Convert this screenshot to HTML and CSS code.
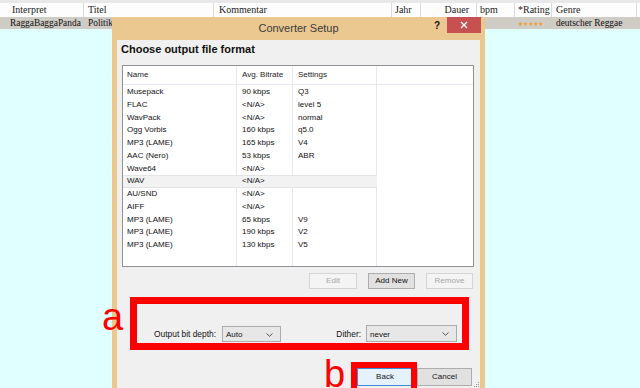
FILE: index.html
```html
<!DOCTYPE html>
<html>
<head>
<meta charset="utf-8">
<title>Converter Setup</title>
<link rel="stylesheet" href="styles.css">
</head>
<body>
<div class="grid">
  <div class="grid-top"></div>
  <div class="grid-head">
    <div class="c c1">Interpret</div>
    <div class="c c2">Titel</div>
    <div class="c c3">Kommentar</div>
    <div class="c c4">Jahr</div>
    <div class="c c5">Dauer</div>
    <div class="c c6">bpm</div>
    <div class="c c7">*Rating</div>
    <div class="c c8">Genre</div>
  </div>
  <div class="grid-row">
    <div class="c c1">RaggaBaggaPanda</div>
    <div class="c c2">Politik</div>
    <div class="c c3"></div>
    <div class="c c4"></div>
    <div class="c c5"></div>
    <div class="c c6"></div>
    <div class="c c7"><span class="stars">★★★★★</span></div>
    <div class="c c8">deutscher Reggae</div>
  </div>
</div>

<div class="dialog">
  <div class="titlebar">
    <div class="title">Converter Setup</div>
    <div class="controls">
      <div class="help">?</div>
      <div class="close">
        <svg width="8" height="8" viewBox="0 0 8 8"><path d="M1 1L7 7M7 1L1 7" stroke="#fff" stroke-width="1.3" fill="none"/></svg>
      </div>
    </div>
  </div>
  <div class="client">
    <div class="heading">Choose output file format</div>
    <div class="list">
      <div class="lh">
        <div class="cell col-name">Name</div>
        <div class="cell col-br">Avg. Bitrate</div>
        <div class="cell col-set">Settings</div>
      </div>
      <div class="lbody">
        <div class="lrow"><div class="cell col-name">Musepack</div><div class="cell col-br">90 kbps</div><div class="cell col-set">Q3</div></div>
        <div class="lrow"><div class="cell col-name">FLAC</div><div class="cell col-br">&lt;N/A&gt;</div><div class="cell col-set">level 5</div></div>
        <div class="lrow"><div class="cell col-name">WavPack</div><div class="cell col-br">&lt;N/A&gt;</div><div class="cell col-set">normal</div></div>
        <div class="lrow"><div class="cell col-name">Ogg Vorbis</div><div class="cell col-br">160 kbps</div><div class="cell col-set">q5.0</div></div>
        <div class="lrow"><div class="cell col-name">MP3 (LAME)</div><div class="cell col-br">165 kbps</div><div class="cell col-set">V4</div></div>
        <div class="lrow"><div class="cell col-name">AAC (Nero)</div><div class="cell col-br">53 kbps</div><div class="cell col-set">ABR</div></div>
        <div class="lrow"><div class="cell col-name">Wave64</div><div class="cell col-br">&lt;N/A&gt;</div><div class="cell col-set"></div></div>
        <div class="lrow sel"><div class="cell col-name">WAV</div><div class="cell col-br">&lt;N/A&gt;</div><div class="cell col-set"></div></div>
        <div class="lrow"><div class="cell col-name">AU/SND</div><div class="cell col-br">&lt;N/A&gt;</div><div class="cell col-set"></div></div>
        <div class="lrow"><div class="cell col-name">AIFF</div><div class="cell col-br">&lt;N/A&gt;</div><div class="cell col-set"></div></div>
        <div class="lrow"><div class="cell col-name">MP3 (LAME)</div><div class="cell col-br">65 kbps</div><div class="cell col-set">V9</div></div>
        <div class="lrow"><div class="cell col-name">MP3 (LAME)</div><div class="cell col-br">190 kbps</div><div class="cell col-set">V2</div></div>
        <div class="lrow"><div class="cell col-name">MP3 (LAME)</div><div class="cell col-br">130 kbps</div><div class="cell col-set">V5</div></div>
      </div>
    </div>
    <div class="btnrow">
      <div class="btn disabled w48">Edit</div>
      <div class="btn w47">Add New</div>
      <div class="btn disabled w47">Remove</div>
    </div>
    <div class="options">
      <div class="opt g1">
        <span class="lbl">Output bit depth:</span>
        <div class="select s-auto"><span>Auto</span>
          <svg width="7" height="4" viewBox="0 0 7 4"><path d="M0.5 0.5L3.5 3.3L6.5 0.5" stroke="#555" stroke-width="1" fill="none"/></svg>
        </div>
      </div>
      <div class="opt g2">
        <span class="lbl">Dither:</span>
        <div class="select s-never"><span>never</span>
          <svg width="7" height="4" viewBox="0 0 7 4"><path d="M0.5 0.5L3.5 3.3L6.5 0.5" stroke="#555" stroke-width="1" fill="none"/></svg>
        </div>
      </div>
    </div>
    <div class="footer">
      <div class="btn primary w56">Back</div>
      <div class="btn w55">Cancel</div>
    </div>
  </div>
</div>

<div class="box box-a"></div>
<div class="box box-b"></div>
<div class="mark mark-a">a</div>
<div class="mark mark-b">b</div>
<svg class="grip" width="6" height="6" viewBox="0 0 6 6">
  <rect x="4" y="0" width="1" height="1" fill="#999"/>
  <rect x="2" y="2" width="1" height="1" fill="#999"/>
  <rect x="4" y="2" width="1" height="1" fill="#999"/>
  <rect x="0" y="4" width="1" height="1" fill="#999"/>
  <rect x="2" y="4" width="1" height="1" fill="#999"/>
  <rect x="4" y="4" width="1" height="1" fill="#999"/>
</svg>
</body>
</html>
```

FILE: styles.css
```css
* { box-sizing: border-box; }
html, body { margin: 0; padding: 0; }
body {
  width: 640px;
  height: 388px;
  overflow: hidden;
  position: relative;
  background: #e0ffff;
  font-family: "Liberation Serif", "Times New Roman", serif;
}

/* background track list */
.grid-top { height: 3px; background: #e8e8e8; }
.grid-head {
  display: flex;
  height: 14px;
  background: #fdfdfd;
  font-size: 10px;
  line-height: 14px;
  color: #222;
}
.grid-row {
  display: flex;
  height: 12px;
  background: #cfcbc5;
  font-size: 9.4px;
  line-height: 12px;
  color: #111;
}
.c {
  white-space: nowrap;
  overflow: hidden;
  padding-left: 4px;
  border-right: 1px solid #dadada;
}
.grid-row .c { border-right: none; overflow: visible; }
.c1 { width: 84px; padding-left: 12px; }
.grid-row .c1 { padding-left: 10px; }
.c2 { width: 130px; }
.c3 { width: 178px; padding-left: 5px; }
.c4 { width: 29px; padding-left: 3px; }
.c5 { width: 56px; text-align: right; padding-right: 7px; }
.c6 { width: 38px; padding-left: 3px; }
.c7 { width: 37px; padding-left: 3px; }
.c8 { width: 85px; }
.stars {
  font-family: "DejaVu Sans", sans-serif;
  font-size: 6px;
  color: #f0a030;
  letter-spacing: -0.3px;
}

/* dialog window */
.dialog {
  position: absolute;
  left: 112px;
  top: 17px;
  width: 373px;
  height: 371px;
  background: #ecc891;
  font-family: "Liberation Sans", Arial, sans-serif;
  font-size: 8px;
  color: #000;
}
.titlebar {
  height: 23px;
  display: grid;
  grid-template-columns: 1fr auto 1fr;
  align-items: start;
}
.title {
  grid-column: 2;
  font-size: 11px;
  line-height: 23px;
  color: #3a3a3a;
}
.controls {
  grid-column: 3;
  justify-self: end;
  display: flex;
  padding-right: 4px;
}
.help {
  width: 20px;
  height: 16px;
  font-weight: bold;
  font-size: 10px;
  line-height: 17px;
  text-align: center;
  color: #111;
}
.close {
  width: 34px;
  height: 16px;
  background: #c75050;
  display: flex;
  align-items: center;
  justify-content: center;
}
.client {
  margin: 0 5px;
  height: 348px;
  background: #f0f0f0;
  display: flex;
  flex-direction: column;
}
.heading {
  margin-top: 2px;
  padding-left: 4px;
  font-size: 11px;
  font-weight: bold;
  line-height: 14px;
  color: #111;
}

/* list view */
.list {
  margin: 9px 0 0 5px;
  width: 352px;
  height: 202px;
  border: 1px solid #8e9296;
  background: #fff;
  display: flex;
  flex-direction: column;
}
.lh {
  display: flex;
  height: 19px;
  line-height: 18px;
  border-bottom: 1px solid #e6eaf0;
  color: #222;
}
.lh .cell { border-right: 1px solid #e6eaf0; }
.cell { white-space: nowrap; overflow: hidden; }
.col-name { width: 114px; padding-left: 4px; }
.col-br { width: 56px; padding-left: 5px; }
.col-set { width: 84px; padding-left: 5px; }
.lbody {
  flex: 1;
  padding-top: 1px;
  background-image:
    linear-gradient(#e6eaf0, #e6eaf0),
    linear-gradient(#e6eaf0, #e6eaf0),
    linear-gradient(#e6eaf0, #e6eaf0);
  background-size: 1px 100%, 1px 100%, 1px 100%;
  background-position: 113px 0, 169px 0, 253px 0;
  background-repeat: no-repeat;
}
.lrow {
  display: flex;
  width: 254px;
  height: 12.75px;
  line-height: 12.75px;
  color: #111;
}
.lrow.sel {
  background: #f2f2f2;
  box-shadow: inset 0 1px 0 #e4e4e4, inset 0 -1px 0 #e4e4e4;
}

/* buttons */
.btnrow {
  margin-top: 6px;
  display: flex;
  justify-content: flex-end;
  gap: 11px;
  padding-right: 7px;
}
.btn {
  height: 16px;
  line-height: 14px;
  text-align: center;
  border: 1px solid #adadad;
  background: #e1e1e1;
  color: #111;
}
.btn.disabled {
  border-color: #d4d4d4;
  background: #f4f4f4;
  color: #a6a6a6;
}
.btn.primary {
  border-color: #3c8ad6;
  background: #e5f1fb;
}
.w48 { width: 48px; }
.w47 { width: 47px; }
.w56 { width: 56px; }
.w55 { width: 55px; }

/* options */
.options {
  margin-top: 36px;
  display: flex;
  height: 17px;
}
.opt {
  display: flex;
  justify-content: flex-end;
  align-items: center;
  gap: 6px;
}
.g1 { width: 164px; }
.g2 { width: 176px; gap: 5px; }
.lbl { font-size: 8.4px; color: #111; }
.select {
  height: 17px;
  border: 1px solid #acacac;
  background: #e7e7e7;
  display: flex;
  align-items: center;
  justify-content: space-between;
  padding: 1px 7px 0 3px;
  color: #111;
}
.s-auto { width: 59px; height: 16px; margin-top: 1px; }
.s-never { width: 91px; }

/* footer */
.footer {
  margin-top: 26px;
  display: flex;
  justify-content: flex-end;
  gap: 4px;
  padding-right: 8px;
}
.footer .btn { height: 18px; line-height: 16px; }

/* annotations */
.box {
  position: absolute;
  border: 7px solid #ff0000;
}
.box-a { left: 130px; top: 297px; width: 339px; height: 53px; }
.box-b { left: 351px; top: 362px; width: 66px; height: 40px; border-width: 6px; }
.mark {
  position: absolute;
  font-family: "Liberation Sans", Arial, sans-serif;
  font-size: 38px;
  line-height: 38px;
  color: #ff0000;
}
.mark-a { left: 102px; top: 298px; }
.mark-b { left: 324px; top: 355px; }
.grip { position: absolute; left: 474px; top: 382px; }
```
